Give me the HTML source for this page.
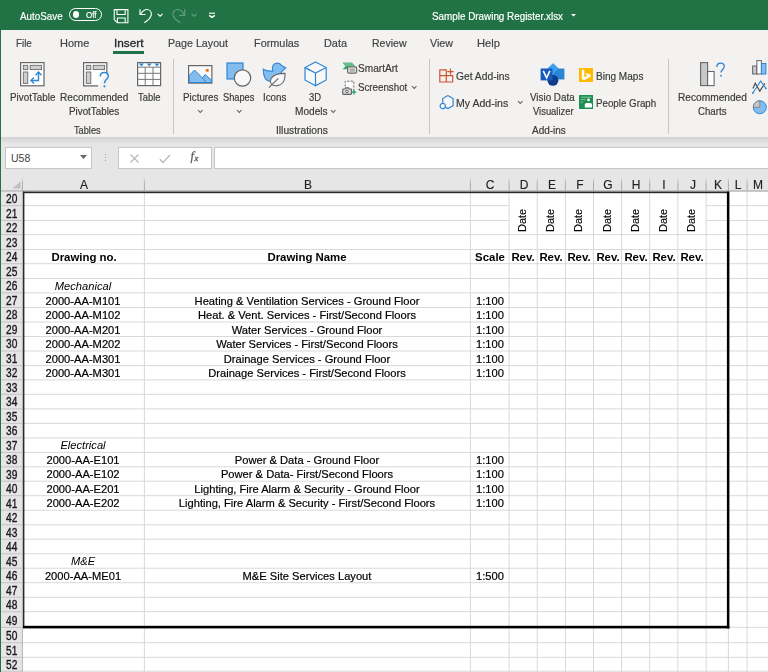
<!DOCTYPE html>
<html><head><meta charset="utf-8"><style>
*{margin:0;padding:0;box-sizing:border-box}
html,body{width:768px;height:672px;overflow:hidden;background:#fff;font-family:"Liberation Sans",sans-serif}
.a{position:absolute}
.t{position:absolute;white-space:nowrap;line-height:1}
.ui{font-size:11px;color:#444;letter-spacing:-0.25px}
.cell{font-size:11px;color:#000;position:absolute;white-space:nowrap;line-height:1}
</style></head>
<body>
<div class="a" style="left:0;top:0;width:768px;height:30px;background:#217346"></div>
<svg class="a" style="left:20.2px;top:5.5px;overflow:visible;will-change:transform" width="42.6" height="18"><text x="0" y="14" font-family="Liberation Sans" font-size="11.5" fill="#fff" font-weight="400" font-style="normal" textLength="42.6" lengthAdjust="spacingAndGlyphs" stroke="#fff" stroke-width="0.2">AutoSave</text></svg>
<div class="a" style="left:69.3px;top:7.8px;width:32.5px;height:13.6px;border:1.2px solid #fff;border-radius:7px"></div>
<div class="a" style="left:72.6px;top:11.2px;width:6.7px;height:6.7px;background:#fff;border-radius:50%"></div>
<svg class="a" style="left:85.5px;top:3.8999999999999986px;overflow:visible;will-change:transform" width="10.6" height="18"><text x="0" y="14" font-family="Liberation Sans" font-size="8.8" fill="#fff" font-weight="400" font-style="normal" textLength="10.6" lengthAdjust="spacingAndGlyphs" stroke="#fff" stroke-width="0.2">Off</text></svg>
<svg class="a" style="left:113px;top:9px" width="16" height="15" viewBox="0 0 16 15">
<path d="M1.25 0.6 H14.9 V13.75 H4.4 L1.25 10.6 Z" fill="none" stroke="#fff" stroke-width="1.1"/>
<path d="M4 0.6 V5.5 H12.2 V0.6" fill="none" stroke="#fff" stroke-width="1.1"/>
<path d="M4.4 13.75 V9 H12.2 V13.75" fill="none" stroke="#fff" stroke-width="1.1"/>
</svg>
<svg class="a" style="left:138px;top:8px" width="16" height="16" viewBox="0 0 16 16">
<path d="M2 1.3 V6.5 H7.5" fill="none" stroke="#fff" stroke-width="1.15"/>
<path d="M2.5 6.3 C4.5 3 7 1.5 9 1.5 C11.5 1.5 13.4 3.5 13.4 6.2 C13.4 9 10.5 12 6.3 14.75" fill="none" stroke="#fff" stroke-width="1.15"/>
</svg>
<svg class="a" style="left:157px;top:12.8px" width="7" height="5" viewBox="0 0 7 5"><path d="M0.6 0.8 L3.1 3.2 L5.6 0.8" fill="none" stroke="#fff" stroke-width="1.1"/></svg>
<svg class="a" style="left:172px;top:8px" width="16" height="16" viewBox="0 0 16 16" opacity="0.3">
<path d="M12.75 1.1 V7.3 H7.3" fill="none" stroke="#fff" stroke-width="1.15"/>
<path d="M12.5 7 C10.5 3 8 1.5 5.7 1.5 C3 1.5 1 3.5 1 6.2 C1 9 3.5 12 8.5 14.75" fill="none" stroke="#fff" stroke-width="1.15"/>
</svg>
<svg class="a" style="left:190.5px;top:12.8px;opacity:0.3" width="7" height="5" viewBox="0 0 7 5"><path d="M0.6 0.8 L3.1 3.2 L5.6 0.8" fill="none" stroke="#fff" stroke-width="1.1"/></svg>
<svg class="a" style="left:208px;top:11px" width="8" height="8" viewBox="0 0 8 8"><path d="M1 2.2 H7" stroke="#fff" stroke-width="1.1"/><path d="M1.2 4.3 L4 6.4 L6.8 4.3" fill="none" stroke="#fff" stroke-width="1.5"/></svg>
<svg class="a" style="left:432.3px;top:5.600000000000001px;overflow:visible;will-change:transform" width="131" height="18"><text x="0" y="14" font-family="Liberation Sans" font-size="11.5" fill="#fff" font-weight="400" font-style="normal" textLength="131" lengthAdjust="spacingAndGlyphs" stroke="#fff" stroke-width="0.2">Sample Drawing Register.xlsx</text></svg>
<svg class="a" style="left:570.6px;top:14.2px" width="5" height="3" viewBox="0 0 5 3"><path d="M0 0 H5 L2.5 2.6 Z" fill="#fff"/></svg>
<div class="a" style="left:0;top:30px;width:768px;height:107px;background:#f3f2f1"></div>
<div class="a" style="left:0;top:30px;width:1px;height:642px;background:#217346"></div>
<svg class="a" style="left:15.5px;top:33.1px;overflow:visible;will-change:transform" width="15.8" height="18"><text x="0" y="14" font-family="Liberation Sans" font-size="11.5" fill="#444" font-weight="400" font-style="normal" textLength="15.8" lengthAdjust="spacingAndGlyphs" stroke="#444" stroke-width="0.2">File</text></svg>
<svg class="a" style="left:60px;top:33.1px;overflow:visible;will-change:transform" width="29.3" height="18"><text x="0" y="14" font-family="Liberation Sans" font-size="11.5" fill="#444" font-weight="400" font-style="normal" textLength="29.3" lengthAdjust="spacingAndGlyphs" stroke="#444" stroke-width="0.2">Home</text></svg>
<svg class="a" style="left:113.6px;top:33.1px;overflow:visible;will-change:transform" width="29.5" height="18"><text x="0" y="14" font-family="Liberation Sans" font-size="11.5" fill="#262626" stroke="#262626" stroke-width="0.3" textLength="29.5" lengthAdjust="spacingAndGlyphs">Insert</text></svg>
<svg class="a" style="left:168.3px;top:33.1px;overflow:visible;will-change:transform" width="60" height="18"><text x="0" y="14" font-family="Liberation Sans" font-size="11.5" fill="#444" font-weight="400" font-style="normal" textLength="60" lengthAdjust="spacingAndGlyphs" stroke="#444" stroke-width="0.2">Page Layout</text></svg>
<svg class="a" style="left:254.2px;top:33.1px;overflow:visible;will-change:transform" width="45.3" height="18"><text x="0" y="14" font-family="Liberation Sans" font-size="11.5" fill="#444" font-weight="400" font-style="normal" textLength="45.3" lengthAdjust="spacingAndGlyphs" stroke="#444" stroke-width="0.2">Formulas</text></svg>
<svg class="a" style="left:324.3px;top:33.1px;overflow:visible;will-change:transform" width="23" height="18"><text x="0" y="14" font-family="Liberation Sans" font-size="11.5" fill="#444" font-weight="400" font-style="normal" textLength="23" lengthAdjust="spacingAndGlyphs" stroke="#444" stroke-width="0.2">Data</text></svg>
<svg class="a" style="left:372px;top:33.1px;overflow:visible;will-change:transform" width="34.5" height="18"><text x="0" y="14" font-family="Liberation Sans" font-size="11.5" fill="#444" font-weight="400" font-style="normal" textLength="34.5" lengthAdjust="spacingAndGlyphs" stroke="#444" stroke-width="0.2">Review</text></svg>
<svg class="a" style="left:430px;top:33.1px;overflow:visible;will-change:transform" width="23" height="18"><text x="0" y="14" font-family="Liberation Sans" font-size="11.5" fill="#444" font-weight="400" font-style="normal" textLength="23" lengthAdjust="spacingAndGlyphs" stroke="#444" stroke-width="0.2">View</text></svg>
<svg class="a" style="left:476.6px;top:33.1px;overflow:visible;will-change:transform" width="23" height="18"><text x="0" y="14" font-family="Liberation Sans" font-size="11.5" fill="#444" font-weight="400" font-style="normal" textLength="23" lengthAdjust="spacingAndGlyphs" stroke="#444" stroke-width="0.2">Help</text></svg>
<div class="a" style="left:113.3px;top:51px;width:30.7px;height:2.5px;background:#217346"></div>
<svg class="a" style="left:9.8px;top:87.2px;overflow:visible;will-change:transform" width="45.5" height="18"><text x="0" y="14" font-family="Liberation Sans" font-size="11.5" fill="#3b3a39" font-weight="400" font-style="normal" textLength="45.5" lengthAdjust="spacingAndGlyphs" stroke="#3b3a39" stroke-width="0.2">PivotTable</text></svg>
<svg class="a" style="left:60px;top:87.2px;overflow:visible;will-change:transform" width="68.3" height="18"><text x="0" y="14" font-family="Liberation Sans" font-size="11.5" fill="#3b3a39" font-weight="400" font-style="normal" textLength="68.3" lengthAdjust="spacingAndGlyphs" stroke="#3b3a39" stroke-width="0.2">Recommended</text></svg>
<svg class="a" style="left:69.3px;top:100.8px;overflow:visible;will-change:transform" width="50.2" height="18"><text x="0" y="14" font-family="Liberation Sans" font-size="11.5" fill="#3b3a39" font-weight="400" font-style="normal" textLength="50.2" lengthAdjust="spacingAndGlyphs" stroke="#3b3a39" stroke-width="0.2">PivotTables</text></svg>
<svg class="a" style="left:138px;top:87.2px;overflow:visible;will-change:transform" width="22.5" height="18"><text x="0" y="14" font-family="Liberation Sans" font-size="11.5" fill="#3b3a39" font-weight="400" font-style="normal" textLength="22.5" lengthAdjust="spacingAndGlyphs" stroke="#3b3a39" stroke-width="0.2">Table</text></svg>
<svg class="a" style="left:73.9px;top:119.9px;overflow:visible;will-change:transform" width="26.6" height="18"><text x="0" y="14" font-family="Liberation Sans" font-size="10.6" fill="#3b3a39" font-weight="400" font-style="normal" textLength="26.6" lengthAdjust="spacingAndGlyphs" stroke="#3b3a39" stroke-width="0.2">Tables</text></svg>
<div class="a" style="left:173px;top:59px;width:1px;height:75px;background:#c8c6c4"></div>
<svg class="a" style="left:20px;top:62px" width="25" height="25" viewBox="0 0 25 25">
<rect x="0.6" y="0.6" width="23.4" height="23.2" fill="#fff" stroke="#666" stroke-width="1.2"/>
<rect x="3.3" y="3.3" width="4.5" height="4.3" fill="#cfcfcf" stroke="#6a6a6a" stroke-width="0.9"/>
<rect x="10.2" y="3.3" width="11.4" height="4.3" fill="#cfcfcf" stroke="#6a6a6a" stroke-width="0.9"/>
<rect x="3.3" y="10" width="4.5" height="11.4" fill="#cfcfcf" stroke="#6a6a6a" stroke-width="0.9"/>
<path d="M11 18.5 H18.5 V10.2" fill="none" stroke="#2e86d4" stroke-width="1.4"/>
<path d="M15.5 13.2 L18.5 10 L21.5 13.2" fill="none" stroke="#2e86d4" stroke-width="1.4"/>
<path d="M14 15.6 L11 18.5 L14 21.4" fill="none" stroke="#2e86d4" stroke-width="1.4"/>
</svg>
<svg class="a" style="left:82.8px;top:62px" width="27" height="27" viewBox="0 0 27 27">
<path d="M15 23.8 H0.6 V0.6 H23.8 V11" fill="#fff" stroke="#666" stroke-width="1.2"/>
<rect x="3.3" y="3.3" width="4.5" height="4.3" fill="#cfcfcf" stroke="#6a6a6a" stroke-width="0.9"/>
<rect x="10.2" y="3.3" width="11.4" height="4.3" fill="#cfcfcf" stroke="#6a6a6a" stroke-width="0.9"/>
<rect x="3.3" y="10" width="4.5" height="11.4" fill="#cfcfcf" stroke="#6a6a6a" stroke-width="0.9"/>
<path d="M17.3 14.5 C17.3 12 19 10.6 21.3 10.6 C23.8 10.6 25.3 12.2 25.3 14.2 C25.3 17.2 21.5 17.5 21.5 21.2" fill="none" stroke="#2e86d4" stroke-width="1.5"/>
<circle cx="21.5" cy="24.3" r="1.1" fill="#2e86d4"/>
</svg>
<svg class="a" style="left:137px;top:62px" width="25" height="25" viewBox="0 0 25 25">
<rect x="0.6" y="0.6" width="23" height="23" fill="#fff" stroke="#666" stroke-width="1.2"/>
<path d="M0.6 5.2 H23.6 M0.6 11.3 H23.6 M0.6 17.4 H23.6 M8.2 5.2 V23.6 M16 5.2 V23.6" stroke="#777" stroke-width="1"/>
<path d="M1.8 1.6 H7 L4.4 4.4 Z M9.6 1.6 H14.8 L12.2 4.4 Z M17.4 1.6 H22.6 L20 4.4 Z" fill="#2e86d4"/>
</svg>
<svg class="a" style="left:182.7px;top:86.6px;overflow:visible;will-change:transform" width="35.5" height="18"><text x="0" y="14" font-family="Liberation Sans" font-size="11.5" fill="#3b3a39" font-weight="400" font-style="normal" textLength="35.5" lengthAdjust="spacingAndGlyphs" stroke="#3b3a39" stroke-width="0.2">Pictures</text></svg>
<svg class="a" style="left:222.6px;top:86.6px;overflow:visible;will-change:transform" width="31.4" height="18"><text x="0" y="14" font-family="Liberation Sans" font-size="11.5" fill="#3b3a39" font-weight="400" font-style="normal" textLength="31.4" lengthAdjust="spacingAndGlyphs" stroke="#3b3a39" stroke-width="0.2">Shapes</text></svg>
<svg class="a" style="left:262.9px;top:86.6px;overflow:visible;will-change:transform" width="23.4" height="18"><text x="0" y="14" font-family="Liberation Sans" font-size="11.5" fill="#3b3a39" font-weight="400" font-style="normal" textLength="23.4" lengthAdjust="spacingAndGlyphs" stroke="#3b3a39" stroke-width="0.2">Icons</text></svg>
<svg class="a" style="left:309.4px;top:86.6px;overflow:visible;will-change:transform" width="12.1" height="18"><text x="0" y="14" font-family="Liberation Sans" font-size="11.5" fill="#3b3a39" font-weight="400" font-style="normal" textLength="12.1" lengthAdjust="spacingAndGlyphs" stroke="#3b3a39" stroke-width="0.2">3D</text></svg>
<svg class="a" style="left:295px;top:100.8px;overflow:visible;will-change:transform" width="32.7" height="18"><text x="0" y="14" font-family="Liberation Sans" font-size="11.5" fill="#3b3a39" font-weight="400" font-style="normal" textLength="32.7" lengthAdjust="spacingAndGlyphs" stroke="#3b3a39" stroke-width="0.2">Models</text></svg>
<svg class="a" style="left:198.3px;top:109.5px;overflow:visible" width="4.5" height="2.5"><path d="M0 0 L2.25 2.5 L4.5 0" fill="none" stroke="#555" stroke-width="1.1"/></svg>
<svg class="a" style="left:236.5px;top:109.5px;overflow:visible" width="4.5" height="2.5"><path d="M0 0 L2.25 2.5 L4.5 0" fill="none" stroke="#555" stroke-width="1.1"/></svg>
<svg class="a" style="left:331px;top:109.5px;overflow:visible" width="4.5" height="2.5"><path d="M0 0 L2.25 2.5 L4.5 0" fill="none" stroke="#555" stroke-width="1.1"/></svg>
<svg class="a" style="left:275.6px;top:119.9px;overflow:visible;will-change:transform" width="51.8" height="18"><text x="0" y="14" font-family="Liberation Sans" font-size="10.6" fill="#3b3a39" font-weight="400" font-style="normal" textLength="51.8" lengthAdjust="spacingAndGlyphs" stroke="#3b3a39" stroke-width="0.2">Illustrations</text></svg>
<svg class="a" style="left:188px;top:64.5px" width="25" height="19" viewBox="0 0 25 19">
<rect x="0.6" y="0.6" width="23.3" height="17.5" fill="#f8f8f8" stroke="#666" stroke-width="1.2"/>
<path d="M1.2 10.5 L6.5 5 L14.5 13 L17 9.5 L23.3 15 V17.5 H1.2 Z" fill="#83bdf0" stroke="#2e86d4" stroke-width="1"/>
<path d="M14.5 13 L18.5 17.5" stroke="#2e86d4" stroke-width="1"/>
<circle cx="19.3" cy="5.3" r="1.6" fill="#e8731a"/>
</svg>
<svg class="a" style="left:226px;top:61.5px" width="27" height="26" viewBox="0 0 27 26">
<rect x="1" y="1" width="16" height="16" fill="#83bdf0" stroke="#2e86d4" stroke-width="1.2"/>
<circle cx="16.5" cy="16" r="8.2" fill="#f8f8f8" stroke="#666" stroke-width="1.2"/>
</svg>
<svg class="a" style="left:262px;top:61.5px" width="26" height="27" viewBox="0 0 26 27">
<path d="M1.3 7.2 C3.5 9 7.5 9.3 10.9 9 C10.5 8 10.4 6.8 10.5 5.6 A4.9 4.9 0 0 1 19.6 3.6 L23.8 5.9 L20.2 9 C18.5 13 15 16.5 8.5 19.5 C3.5 19 1.3 14 1.3 7.2 Z" fill="#83bdf0" stroke="#2e86d4" stroke-width="1.1"/>
<path d="M23 11.4 C17 11.4 12 12.5 9.5 16 C8 18.5 8.5 21.5 10.3 22.8 C13 24.5 18 24 21 20.5 C22.8 18 23 15 23 11.4 Z" fill="#f8f8f8" stroke="#666" stroke-width="1.1"/>
<path d="M6.9 25.7 L16.3 16.4" stroke="#666" stroke-width="1.1"/>
</svg>
<svg class="a" style="left:303.5px;top:60.5px" width="24" height="26" viewBox="0 0 24 26">
<path d="M11.5 1 L22.2 6.5 V19 L11.5 24.8 L1 19 V6.5 Z" fill="#f8f8f8" stroke="#2e86d4" stroke-width="1.2"/>
<path d="M1 6.5 L11.5 12 L22.2 6.5 M11.5 12 V24.8" fill="none" stroke="#2e86d4" stroke-width="1.2"/>
<path d="M1 6.5 L7 9.8" stroke="#2e86d4" stroke-width="1.2"/>
</svg>
<svg class="a" style="left:358.4px;top:58.3px;overflow:visible;will-change:transform" width="39.9" height="18"><text x="0" y="14" font-family="Liberation Sans" font-size="11.5" fill="#3b3a39" font-weight="400" font-style="normal" textLength="39.9" lengthAdjust="spacingAndGlyphs" stroke="#3b3a39" stroke-width="0.2">SmartArt</text></svg>
<svg class="a" style="left:341.5px;top:61.5px" width="16" height="12" viewBox="0 0 16 12">
<path d="M0.7 0.7 H9.9 L13.2 4.3 H7.5 L4.3 7.3 H0.7 L3.6 4 Z" fill="#33a96a"/>
<path d="M0.7 0.7 H9.9 L13.2 4.3 H3.6 Z" fill="#62c08c"/>
<rect x="5.6" y="4.8" width="9" height="6.4" rx="1.2" fill="#e4e4e4" stroke="#6a6a6a" stroke-width="1.2"/>
<path d="M7.6 7.3 H13 M7.6 9 H13" stroke="#777" stroke-width="0.8"/>
</svg>
<svg class="a" style="left:358.4px;top:76.8px;overflow:visible;will-change:transform" width="49.3" height="18"><text x="0" y="14" font-family="Liberation Sans" font-size="11.5" fill="#3b3a39" font-weight="400" font-style="normal" textLength="49.3" lengthAdjust="spacingAndGlyphs" stroke="#3b3a39" stroke-width="0.2">Screenshot</text></svg>
<svg class="a" style="left:411.8px;top:86.3px;overflow:visible" width="4.5" height="2.5"><path d="M0 0 L2.25 2.5 L4.5 0" fill="none" stroke="#555" stroke-width="1.1"/></svg>
<svg class="a" style="left:341.5px;top:79.5px" width="16" height="15" viewBox="0 0 16 15">
<rect x="3.2" y="1.2" width="8.6" height="7" fill="#fafafa"/>
<path d="M3.2 6.5 V1.2 H11.8 V10" fill="none" stroke="#6a6a6a" stroke-width="1" stroke-dasharray="2.2 1.4"/>
<path d="M1.4 9 H3 L3.6 7.9 H6.6 L7.2 9 H8.8 Q9.5 9 9.5 9.7 V13.6 Q9.5 14.3 8.8 14.3 H1.4 Q0.7 14.3 0.7 13.6 V9.7 Q0.7 9 1.4 9 Z" fill="#d9d9d9" stroke="#666" stroke-width="1.2"/>
<circle cx="5" cy="11.4" r="1.3" fill="#f3f3f3" stroke="#666" stroke-width="1"/>
<path d="M12 9.8 V14.5 M9.7 12.2 H14.3" stroke="#21a366" stroke-width="1.3"/>
</svg>
<div class="a" style="left:429px;top:59px;width:1px;height:75px;background:#c8c6c4"></div>
<svg class="a" style="left:455.8px;top:65.6px;overflow:visible;will-change:transform" width="53.7" height="18"><text x="0" y="14" font-family="Liberation Sans" font-size="11.5" fill="#3b3a39" font-weight="400" font-style="normal" textLength="53.7" lengthAdjust="spacingAndGlyphs" stroke="#3b3a39" stroke-width="0.2">Get Add-ins</text></svg>
<svg class="a" style="left:438.5px;top:67.5px" width="15" height="15" viewBox="0 0 15 15">
<path d="M0.8 1.8 H7.3 V14 H0.8 Z M0.8 7.6 H13.7 V14 H7.3" fill="none" stroke="#d35230" stroke-width="1.2"/>
<path d="M11.5 0.4 V6.8 M8.3 3.6 H14.7" stroke="#d35230" stroke-width="1.2"/>
</svg>
<svg class="a" style="left:455.8px;top:92.6px;overflow:visible;will-change:transform" width="52.2" height="18"><text x="0" y="14" font-family="Liberation Sans" font-size="11.5" fill="#3b3a39" font-weight="400" font-style="normal" textLength="52.2" lengthAdjust="spacingAndGlyphs" stroke="#3b3a39" stroke-width="0.2">My Add-ins</text></svg>
<svg class="a" style="left:518.3px;top:101.3px;overflow:visible" width="4.5" height="2.5"><path d="M0 0 L2.25 2.5 L4.5 0" fill="none" stroke="#555" stroke-width="1.1"/></svg>
<svg class="a" style="left:438.5px;top:95px" width="16" height="15" viewBox="0 0 16 15">
<path d="M3.7 7.8 V3.6 L8.9 0.6 L14.1 3.6 V10.7 L8.9 13.5 L6.6 12.3" fill="#f6f6f6" stroke="#2e86d4" stroke-width="1.2"/>
<circle cx="3.8" cy="11" r="2.7" fill="#fff" stroke="#2e86d4" stroke-width="1.2"/>
</svg>
<svg class="a" style="left:529.6px;top:87.1px;overflow:visible;will-change:transform" width="44.6" height="18"><text x="0" y="14" font-family="Liberation Sans" font-size="11.5" fill="#3b3a39" font-weight="400" font-style="normal" textLength="44.6" lengthAdjust="spacingAndGlyphs" stroke="#3b3a39" stroke-width="0.2">Visio Data</text></svg>
<svg class="a" style="left:532.7px;top:100.8px;overflow:visible;will-change:transform" width="40.6" height="18"><text x="0" y="14" font-family="Liberation Sans" font-size="11.5" fill="#3b3a39" font-weight="400" font-style="normal" textLength="40.6" lengthAdjust="spacingAndGlyphs" stroke="#3b3a39" stroke-width="0.2">Visualizer</text></svg>
<svg class="a" style="left:539.5px;top:62.5px" width="25" height="24" viewBox="0 0 25 24">
<path d="M12.9 0.3 L18.6 5.5 H24.4 V16.4 H12.9 Z" fill="#2a85d6"/>
<path d="M12.9 0.3 L18.6 5.5 L12.9 11.5 L7.4 5.5 Z" fill="#3ca2ee"/>
<circle cx="12.9" cy="17.3" r="5.5" fill="#0f3d8c"/>
<rect x="0.6" y="5.5" width="11.9" height="11.9" fill="#185abd"/>
<path d="M3.3 7.8 L6.6 14.8 L9.9 7.8" fill="none" stroke="#fff" stroke-width="1.6"/>
</svg>
<svg class="a" style="left:595.7px;top:65.6px;overflow:visible;will-change:transform" width="47.4" height="18"><text x="0" y="14" font-family="Liberation Sans" font-size="11.5" fill="#3b3a39" font-weight="400" font-style="normal" textLength="47.4" lengthAdjust="spacingAndGlyphs" stroke="#3b3a39" stroke-width="0.2">Bing Maps</text></svg>
<svg class="a" style="left:579px;top:68px" width="14" height="14" viewBox="0 0 14 14">
<rect x="0" y="0" width="14" height="14" fill="#ffb900"/>
<path d="M2.8 1.4 L5.3 2.1 V9.2 L8.8 7.4 L7.2 6.7 L6.6 5 L11.6 6.5 V8.5 L5.3 12.3 L2.8 10.9 Z" fill="#fff"/>
</svg>
<svg class="a" style="left:595.7px;top:92.6px;overflow:visible;will-change:transform" width="60.2" height="18"><text x="0" y="14" font-family="Liberation Sans" font-size="11.5" fill="#3b3a39" font-weight="400" font-style="normal" textLength="60.2" lengthAdjust="spacingAndGlyphs" stroke="#3b3a39" stroke-width="0.2">People Graph</text></svg>
<svg class="a" style="left:579px;top:95px" width="14" height="14" viewBox="0 0 14 14">
<rect x="0" y="0" width="14" height="14" fill="#1d8f52"/>
<path d="M1.8 2.2 H12.5 M1.8 4.7 H6.5 M1.8 7.2 H3.8" stroke="#8fd0ac" stroke-width="0.9"/>
<circle cx="9.5" cy="4.9" r="1.4" fill="#fff"/>
<path d="M5.8 12.6 V9.5 C5.8 8.3 7 7.9 9.4 7.9 C11.8 7.9 13 8.3 13 9.5 V12.6 Z" fill="#fff"/>
</svg>
<svg class="a" style="left:531.5px;top:119.9px;overflow:visible;will-change:transform" width="33.8" height="18"><text x="0" y="14" font-family="Liberation Sans" font-size="10.6" fill="#3b3a39" font-weight="400" font-style="normal" textLength="33.8" lengthAdjust="spacingAndGlyphs" stroke="#3b3a39" stroke-width="0.2">Add-ins</text></svg>
<div class="a" style="left:668px;top:59px;width:1px;height:75px;background:#c8c6c4"></div>
<svg class="a" style="left:677.6px;top:87.3px;overflow:visible;will-change:transform" width="68.9" height="18"><text x="0" y="14" font-family="Liberation Sans" font-size="11.5" fill="#3b3a39" font-weight="400" font-style="normal" textLength="68.9" lengthAdjust="spacingAndGlyphs" stroke="#3b3a39" stroke-width="0.2">Recommended</text></svg>
<svg class="a" style="left:698.3px;top:100.8px;overflow:visible;will-change:transform" width="28.5" height="18"><text x="0" y="14" font-family="Liberation Sans" font-size="11.5" fill="#3b3a39" font-weight="400" font-style="normal" textLength="28.5" lengthAdjust="spacingAndGlyphs" stroke="#3b3a39" stroke-width="0.2">Charts</text></svg>
<svg class="a" style="left:700px;top:62px" width="26" height="25" viewBox="0 0 26 25">
<rect x="0.6" y="0.6" width="7" height="23" fill="#c8c8c8" stroke="#666" stroke-width="1.1"/>
<rect x="7.6" y="9.5" width="6.5" height="14.1" fill="#fff" stroke="#666" stroke-width="1.1"/>
<path d="M16.8 5 C16.8 2.5 18.3 1.2 20.5 1.2 C22.7 1.2 24.3 2.5 24.3 4.6 C24.3 7.2 21 7.7 21 10.5" fill="none" stroke="#2e86d4" stroke-width="1.3"/>
<circle cx="21" cy="13.7" r="0.9" fill="#2e86d4"/>
</svg>
<svg class="a" style="left:751.5px;top:60px" width="16" height="15" viewBox="0 0 16 15">
<rect x="0.6" y="6" width="4.3" height="8" fill="#c8c8c8" stroke="#666" stroke-width="1"/>
<rect x="4.9" y="0.6" width="4.5" height="13.4" fill="#fff" stroke="#666" stroke-width="1"/>
<rect x="9.4" y="3.5" width="4.5" height="10.5" fill="#83bdf0" stroke="#2e86d4" stroke-width="1"/>
</svg>
<svg class="a" style="left:751.5px;top:79.5px" width="16" height="14" viewBox="0 0 16 14">
<path d="M0.9 8.4 L3.2 3.3 L7.8 11.1 L12.9 3.3" fill="none" stroke="#444" stroke-width="1.1"/>
<path d="M0.9 13 L8.7 1 L13.8 8.4" fill="none" stroke="#2e86d4" stroke-width="1.1"/><circle cx="0.9" cy="13" r="0.9" fill="#2e86d4"/><circle cx="13.8" cy="8.4" r="0.9" fill="#2e86d4"/>
</svg>
<svg class="a" style="left:751.5px;top:99.5px" width="16" height="15" viewBox="0 0 16 15">
<circle cx="7.8" cy="7.3" r="6.5" fill="#83bdf0" stroke="#2e86d4" stroke-width="1"/>
<path d="M7.8 7.3 V0.8 A6.5 6.5 0 0 0 1.3 7.3 Z" fill="#c8c8c8" stroke="#777" stroke-width="0.8"/>
</svg>
<div class="a" style="left:1px;top:137px;width:767px;height:55px;background:#e6e6e6"></div>
<div class="a" style="left:1px;top:137px;width:767px;height:7px;background:linear-gradient(#d2d2d2,#e6e6e6)"></div>
<div class="a" style="left:5.3px;top:146.5px;width:86.7px;height:22.5px;background:#fff;border:1px solid #c6c6c6"></div>
<svg class="a" style="left:11px;top:148px;overflow:visible" width="30" height="18"><text x="0" y="13.9" font-family="Liberation Sans" font-size="11.5" fill="#444" textLength="19.3" lengthAdjust="spacingAndGlyphs">U58</text></svg>
<svg class="a" style="left:79.5px;top:155px" width="7" height="4" viewBox="0 0 7 4"><path d="M0 0 H7 L3.5 4 Z" fill="#666"/></svg>
<div class="a" style="left:104.5px;top:153.5px;width:1.3px;height:1.3px;background:#9a9a9a"></div>
<div class="a" style="left:104.5px;top:156.8px;width:1.3px;height:1.3px;background:#9a9a9a"></div>
<div class="a" style="left:104.5px;top:160.1px;width:1.3px;height:1.3px;background:#9a9a9a"></div>
<div class="a" style="left:117.5px;top:146.5px;width:94px;height:22.5px;background:#fff;border:1px solid #c6c6c6"></div>
<svg class="a" style="left:129px;top:154px" width="11" height="9" viewBox="0 0 11 9"><path d="M1.5 0.5 L9.5 8.5 M9.5 0.5 L1.5 8.5" stroke="#b8b8b8" stroke-width="1.2"/></svg>
<svg class="a" style="left:159px;top:153.5px" width="12" height="10" viewBox="0 0 12 10"><path d="M0.8 5.2 L4 8.5 L11 1" fill="none" stroke="#b8b8b8" stroke-width="1.3"/></svg>
<svg class="a" style="left:189px;top:150px;overflow:visible;will-change:transform" width="14" height="16"><text x="1.5" y="10.3" font-family="Liberation Serif" font-style="italic" font-size="12.5" fill="#5a5a5a" stroke="#5a5a5a" stroke-width="0.25">f</text><text x="5.4" y="11.4" font-family="Liberation Serif" font-style="italic" font-size="8.5" fill="#5a5a5a" stroke="#5a5a5a" stroke-width="0.35">x</text></svg>
<div class="a" style="left:213.5px;top:146.5px;width:560px;height:22.5px;background:#fff;border:1px solid #c6c6c6"></div>
<svg class="a" style="left:11px;top:180.5px" width="10" height="8" viewBox="0 0 10 8"><path d="M9.5 0.5 V7.5 H1.5 Z" fill="#c0c0c0"/></svg>
<svg class="a" style="left:64.4px;top:176.5px;overflow:visible" width="40" height="16"><text x="20" y="12" text-anchor="middle" font-family="Liberation Sans" font-size="12" fill="#222" stroke="#222" stroke-width="0.15">A</text></svg>
<svg class="a" style="left:287.9px;top:176.5px;overflow:visible" width="40" height="16"><text x="20" y="12" text-anchor="middle" font-family="Liberation Sans" font-size="12" fill="#222" stroke="#222" stroke-width="0.15">B</text></svg>
<svg class="a" style="left:470.25px;top:176.5px;overflow:visible" width="40" height="16"><text x="20" y="12" text-anchor="middle" font-family="Liberation Sans" font-size="12" fill="#222" stroke="#222" stroke-width="0.15">C</text></svg>
<svg class="a" style="left:503.6500000000001px;top:176.5px;overflow:visible" width="40" height="16"><text x="20" y="12" text-anchor="middle" font-family="Liberation Sans" font-size="12" fill="#222" stroke="#222" stroke-width="0.15">D</text></svg>
<svg class="a" style="left:531.8px;top:176.5px;overflow:visible" width="40" height="16"><text x="20" y="12" text-anchor="middle" font-family="Liberation Sans" font-size="12" fill="#222" stroke="#222" stroke-width="0.15">E</text></svg>
<svg class="a" style="left:559.95px;top:176.5px;overflow:visible" width="40" height="16"><text x="20" y="12" text-anchor="middle" font-family="Liberation Sans" font-size="12" fill="#222" stroke="#222" stroke-width="0.15">F</text></svg>
<svg class="a" style="left:588.05px;top:176.5px;overflow:visible" width="40" height="16"><text x="20" y="12" text-anchor="middle" font-family="Liberation Sans" font-size="12" fill="#222" stroke="#222" stroke-width="0.15">G</text></svg>
<svg class="a" style="left:616.1500000000001px;top:176.5px;overflow:visible" width="40" height="16"><text x="20" y="12" text-anchor="middle" font-family="Liberation Sans" font-size="12" fill="#222" stroke="#222" stroke-width="0.15">H</text></svg>
<svg class="a" style="left:644.3px;top:176.5px;overflow:visible" width="40" height="16"><text x="20" y="12" text-anchor="middle" font-family="Liberation Sans" font-size="12" fill="#222" stroke="#222" stroke-width="0.15">I</text></svg>
<svg class="a" style="left:672.5px;top:176.5px;overflow:visible" width="40" height="16"><text x="20" y="12" text-anchor="middle" font-family="Liberation Sans" font-size="12" fill="#222" stroke="#222" stroke-width="0.15">J</text></svg>
<svg class="a" style="left:697.75px;top:176.5px;overflow:visible" width="40" height="16"><text x="20" y="12" text-anchor="middle" font-family="Liberation Sans" font-size="12" fill="#222" stroke="#222" stroke-width="0.15">K</text></svg>
<svg class="a" style="left:718.25px;top:176.5px;overflow:visible" width="40" height="16"><text x="20" y="12" text-anchor="middle" font-family="Liberation Sans" font-size="12" fill="#222" stroke="#222" stroke-width="0.15">L</text></svg>
<svg class="a" style="left:738.35px;top:176.5px;overflow:visible" width="40" height="16"><text x="20" y="12" text-anchor="middle" font-family="Liberation Sans" font-size="12" fill="#222" stroke="#222" stroke-width="0.15">M</text></svg>
<div class="a" style="left:1px;top:191.5px;width:21.4px;height:481px;background:#e6e6e6"></div>
<svg class="a" style="left:6px;top:191.0px;overflow:visible" width="18" height="16"><text x="0" y="12" font-family="Liberation Sans" font-size="12" fill="#1a1a1a" stroke="#1a1a1a" stroke-width="0.35" textLength="11.3" lengthAdjust="spacingAndGlyphs">20</text></svg>
<svg class="a" style="left:6px;top:205.9px;overflow:visible" width="18" height="16"><text x="0" y="12" font-family="Liberation Sans" font-size="12" fill="#1a1a1a" stroke="#1a1a1a" stroke-width="0.35" textLength="11.3" lengthAdjust="spacingAndGlyphs">21</text></svg>
<svg class="a" style="left:6px;top:220.0px;overflow:visible" width="18" height="16"><text x="0" y="12" font-family="Liberation Sans" font-size="12" fill="#1a1a1a" stroke="#1a1a1a" stroke-width="0.35" textLength="11.3" lengthAdjust="spacingAndGlyphs">22</text></svg>
<svg class="a" style="left:6px;top:234.9px;overflow:visible" width="18" height="16"><text x="0" y="12" font-family="Liberation Sans" font-size="12" fill="#1a1a1a" stroke="#1a1a1a" stroke-width="0.35" textLength="11.3" lengthAdjust="spacingAndGlyphs">23</text></svg>
<svg class="a" style="left:6px;top:249.1px;overflow:visible" width="18" height="16"><text x="0" y="12" font-family="Liberation Sans" font-size="12" fill="#1a1a1a" stroke="#1a1a1a" stroke-width="0.35" textLength="11.3" lengthAdjust="spacingAndGlyphs">24</text></svg>
<svg class="a" style="left:6px;top:263.9px;overflow:visible" width="18" height="16"><text x="0" y="12" font-family="Liberation Sans" font-size="12" fill="#1a1a1a" stroke="#1a1a1a" stroke-width="0.35" textLength="11.3" lengthAdjust="spacingAndGlyphs">25</text></svg>
<svg class="a" style="left:6px;top:278.29999999999995px;overflow:visible" width="18" height="16"><text x="0" y="12" font-family="Liberation Sans" font-size="12" fill="#1a1a1a" stroke="#1a1a1a" stroke-width="0.35" textLength="11.3" lengthAdjust="spacingAndGlyphs">26</text></svg>
<svg class="a" style="left:6px;top:292.9px;overflow:visible" width="18" height="16"><text x="0" y="12" font-family="Liberation Sans" font-size="12" fill="#1a1a1a" stroke="#1a1a1a" stroke-width="0.35" textLength="11.3" lengthAdjust="spacingAndGlyphs">27</text></svg>
<svg class="a" style="left:6px;top:307.4px;overflow:visible" width="18" height="16"><text x="0" y="12" font-family="Liberation Sans" font-size="12" fill="#1a1a1a" stroke="#1a1a1a" stroke-width="0.35" textLength="11.3" lengthAdjust="spacingAndGlyphs">28</text></svg>
<svg class="a" style="left:6px;top:321.9px;overflow:visible" width="18" height="16"><text x="0" y="12" font-family="Liberation Sans" font-size="12" fill="#1a1a1a" stroke="#1a1a1a" stroke-width="0.35" textLength="11.3" lengthAdjust="spacingAndGlyphs">29</text></svg>
<svg class="a" style="left:6px;top:336.4px;overflow:visible" width="18" height="16"><text x="0" y="12" font-family="Liberation Sans" font-size="12" fill="#1a1a1a" stroke="#1a1a1a" stroke-width="0.35" textLength="11.3" lengthAdjust="spacingAndGlyphs">30</text></svg>
<svg class="a" style="left:6px;top:351.0px;overflow:visible" width="18" height="16"><text x="0" y="12" font-family="Liberation Sans" font-size="12" fill="#1a1a1a" stroke="#1a1a1a" stroke-width="0.35" textLength="11.3" lengthAdjust="spacingAndGlyphs">31</text></svg>
<svg class="a" style="left:6px;top:365.29999999999995px;overflow:visible" width="18" height="16"><text x="0" y="12" font-family="Liberation Sans" font-size="12" fill="#1a1a1a" stroke="#1a1a1a" stroke-width="0.35" textLength="11.3" lengthAdjust="spacingAndGlyphs">32</text></svg>
<svg class="a" style="left:6px;top:379.7px;overflow:visible" width="18" height="16"><text x="0" y="12" font-family="Liberation Sans" font-size="12" fill="#1a1a1a" stroke="#1a1a1a" stroke-width="0.35" textLength="11.3" lengthAdjust="spacingAndGlyphs">33</text></svg>
<svg class="a" style="left:6px;top:394.29999999999995px;overflow:visible" width="18" height="16"><text x="0" y="12" font-family="Liberation Sans" font-size="12" fill="#1a1a1a" stroke="#1a1a1a" stroke-width="0.35" textLength="11.3" lengthAdjust="spacingAndGlyphs">34</text></svg>
<svg class="a" style="left:6px;top:408.79999999999995px;overflow:visible" width="18" height="16"><text x="0" y="12" font-family="Liberation Sans" font-size="12" fill="#1a1a1a" stroke="#1a1a1a" stroke-width="0.35" textLength="11.3" lengthAdjust="spacingAndGlyphs">35</text></svg>
<svg class="a" style="left:6px;top:423.29999999999995px;overflow:visible" width="18" height="16"><text x="0" y="12" font-family="Liberation Sans" font-size="12" fill="#1a1a1a" stroke="#1a1a1a" stroke-width="0.35" textLength="11.3" lengthAdjust="spacingAndGlyphs">36</text></svg>
<svg class="a" style="left:6px;top:437.79999999999995px;overflow:visible" width="18" height="16"><text x="0" y="12" font-family="Liberation Sans" font-size="12" fill="#1a1a1a" stroke="#1a1a1a" stroke-width="0.35" textLength="11.3" lengthAdjust="spacingAndGlyphs">37</text></svg>
<svg class="a" style="left:6px;top:452.2px;overflow:visible" width="18" height="16"><text x="0" y="12" font-family="Liberation Sans" font-size="12" fill="#1a1a1a" stroke="#1a1a1a" stroke-width="0.35" textLength="11.3" lengthAdjust="spacingAndGlyphs">38</text></svg>
<svg class="a" style="left:6px;top:466.59999999999997px;overflow:visible" width="18" height="16"><text x="0" y="12" font-family="Liberation Sans" font-size="12" fill="#1a1a1a" stroke="#1a1a1a" stroke-width="0.35" textLength="11.3" lengthAdjust="spacingAndGlyphs">39</text></svg>
<svg class="a" style="left:6px;top:481.09999999999997px;overflow:visible" width="18" height="16"><text x="0" y="12" font-family="Liberation Sans" font-size="12" fill="#1a1a1a" stroke="#1a1a1a" stroke-width="0.35" textLength="11.3" lengthAdjust="spacingAndGlyphs">40</text></svg>
<svg class="a" style="left:6px;top:495.59999999999997px;overflow:visible" width="18" height="16"><text x="0" y="12" font-family="Liberation Sans" font-size="12" fill="#1a1a1a" stroke="#1a1a1a" stroke-width="0.35" textLength="11.3" lengthAdjust="spacingAndGlyphs">41</text></svg>
<svg class="a" style="left:6px;top:510.19999999999993px;overflow:visible" width="18" height="16"><text x="0" y="12" font-family="Liberation Sans" font-size="12" fill="#1a1a1a" stroke="#1a1a1a" stroke-width="0.35" textLength="11.3" lengthAdjust="spacingAndGlyphs">42</text></svg>
<svg class="a" style="left:6px;top:524.6px;overflow:visible" width="18" height="16"><text x="0" y="12" font-family="Liberation Sans" font-size="12" fill="#1a1a1a" stroke="#1a1a1a" stroke-width="0.35" textLength="11.3" lengthAdjust="spacingAndGlyphs">43</text></svg>
<svg class="a" style="left:6px;top:539.1999999999999px;overflow:visible" width="18" height="16"><text x="0" y="12" font-family="Liberation Sans" font-size="12" fill="#1a1a1a" stroke="#1a1a1a" stroke-width="0.35" textLength="11.3" lengthAdjust="spacingAndGlyphs">44</text></svg>
<svg class="a" style="left:6px;top:553.6px;overflow:visible" width="18" height="16"><text x="0" y="12" font-family="Liberation Sans" font-size="12" fill="#1a1a1a" stroke="#1a1a1a" stroke-width="0.35" textLength="11.3" lengthAdjust="spacingAndGlyphs">45</text></svg>
<svg class="a" style="left:6px;top:568.1px;overflow:visible" width="18" height="16"><text x="0" y="12" font-family="Liberation Sans" font-size="12" fill="#1a1a1a" stroke="#1a1a1a" stroke-width="0.35" textLength="11.3" lengthAdjust="spacingAndGlyphs">46</text></svg>
<svg class="a" style="left:6px;top:582.6999999999999px;overflow:visible" width="18" height="16"><text x="0" y="12" font-family="Liberation Sans" font-size="12" fill="#1a1a1a" stroke="#1a1a1a" stroke-width="0.35" textLength="11.3" lengthAdjust="spacingAndGlyphs">47</text></svg>
<svg class="a" style="left:6px;top:597.1px;overflow:visible" width="18" height="16"><text x="0" y="12" font-family="Liberation Sans" font-size="12" fill="#1a1a1a" stroke="#1a1a1a" stroke-width="0.35" textLength="11.3" lengthAdjust="spacingAndGlyphs">48</text></svg>
<svg class="a" style="left:6px;top:612.6999999999999px;overflow:visible" width="18" height="16"><text x="0" y="12" font-family="Liberation Sans" font-size="12" fill="#1a1a1a" stroke="#1a1a1a" stroke-width="0.35" textLength="11.3" lengthAdjust="spacingAndGlyphs">49</text></svg>
<svg class="a" style="left:6px;top:628.1px;overflow:visible" width="18" height="16"><text x="0" y="12" font-family="Liberation Sans" font-size="12" fill="#1a1a1a" stroke="#1a1a1a" stroke-width="0.35" textLength="11.3" lengthAdjust="spacingAndGlyphs">50</text></svg>
<svg class="a" style="left:6px;top:642.6999999999999px;overflow:visible" width="18" height="16"><text x="0" y="12" font-family="Liberation Sans" font-size="12" fill="#1a1a1a" stroke="#1a1a1a" stroke-width="0.35" textLength="11.3" lengthAdjust="spacingAndGlyphs">51</text></svg>
<svg class="a" style="left:6px;top:656.6px;overflow:visible" width="18" height="16"><text x="0" y="12" font-family="Liberation Sans" font-size="12" fill="#1a1a1a" stroke="#1a1a1a" stroke-width="0.35" textLength="11.3" lengthAdjust="spacingAndGlyphs">52</text></svg>
<svg class="a" style="left:0;top:0" width="768" height="672"><defs><linearGradient id="hg" x1="0" y1="0" x2="0" y2="1"><stop offset="0" stop-color="#ababab" stop-opacity="0"/><stop offset="0.45" stop-color="#ababab"/></linearGradient></defs><rect x="21.9" y="177" width="1" height="14.5" fill="url(#hg)"/><rect x="143.9" y="177" width="1" height="14.5" fill="url(#hg)"/><rect x="469.9" y="177" width="1" height="14.5" fill="url(#hg)"/><rect x="508.6" y="177" width="1" height="14.5" fill="url(#hg)"/><rect x="536.7" y="177" width="1" height="14.5" fill="url(#hg)"/><rect x="564.9" y="177" width="1" height="14.5" fill="url(#hg)"/><rect x="593.0" y="177" width="1" height="14.5" fill="url(#hg)"/><rect x="621.1" y="177" width="1" height="14.5" fill="url(#hg)"/><rect x="649.2" y="177" width="1" height="14.5" fill="url(#hg)"/><rect x="677.4" y="177" width="1" height="14.5" fill="url(#hg)"/><rect x="705.6" y="177" width="1" height="14.5" fill="url(#hg)"/><rect x="727.9" y="177" width="1" height="14.5" fill="url(#hg)"/><rect x="746.6" y="177" width="1" height="14.5" fill="url(#hg)"/><rect x="1" y="190.4" width="767" height="1.1" fill="#ababab"/><rect x="21.9" y="191.5" width="1" height="481" fill="#b4b4b4"/><rect x="1" y="205.1" width="21" height="1" fill="#c4c4c4"/><rect x="23" y="205.1" width="486.1" height="1" fill="#d9d9d9"/><rect x="706.1" y="205.1" width="62" height="1" fill="#d9d9d9"/><rect x="1" y="220.0" width="21" height="1" fill="#c4c4c4"/><rect x="23" y="220.0" width="486.1" height="1" fill="#d9d9d9"/><rect x="706.1" y="220.0" width="62" height="1" fill="#d9d9d9"/><rect x="1" y="234.1" width="21" height="1" fill="#c4c4c4"/><rect x="23" y="234.1" width="745" height="1" fill="#d9d9d9"/><rect x="1" y="249.0" width="21" height="1" fill="#c4c4c4"/><rect x="23" y="249.0" width="745" height="1" fill="#d9d9d9"/><rect x="1" y="263.2" width="21" height="1" fill="#c4c4c4"/><rect x="23" y="263.2" width="745" height="1" fill="#d9d9d9"/><rect x="1" y="278.0" width="21" height="1" fill="#c4c4c4"/><rect x="23" y="278.0" width="745" height="1" fill="#d9d9d9"/><rect x="1" y="292.4" width="21" height="1" fill="#c4c4c4"/><rect x="23" y="292.4" width="745" height="1" fill="#d9d9d9"/><rect x="1" y="307.0" width="21" height="1" fill="#c4c4c4"/><rect x="23" y="307.0" width="745" height="1" fill="#d9d9d9"/><rect x="1" y="321.5" width="21" height="1" fill="#c4c4c4"/><rect x="23" y="321.5" width="745" height="1" fill="#d9d9d9"/><rect x="1" y="336.0" width="21" height="1" fill="#c4c4c4"/><rect x="23" y="336.0" width="745" height="1" fill="#d9d9d9"/><rect x="1" y="350.5" width="21" height="1" fill="#c4c4c4"/><rect x="23" y="350.5" width="745" height="1" fill="#d9d9d9"/><rect x="1" y="365.1" width="21" height="1" fill="#c4c4c4"/><rect x="23" y="365.1" width="745" height="1" fill="#d9d9d9"/><rect x="1" y="379.4" width="21" height="1" fill="#c4c4c4"/><rect x="23" y="379.4" width="745" height="1" fill="#d9d9d9"/><rect x="1" y="393.8" width="21" height="1" fill="#c4c4c4"/><rect x="23" y="393.8" width="745" height="1" fill="#d9d9d9"/><rect x="1" y="408.4" width="21" height="1" fill="#c4c4c4"/><rect x="23" y="408.4" width="745" height="1" fill="#d9d9d9"/><rect x="1" y="422.9" width="21" height="1" fill="#c4c4c4"/><rect x="23" y="422.9" width="745" height="1" fill="#d9d9d9"/><rect x="1" y="437.4" width="21" height="1" fill="#c4c4c4"/><rect x="23" y="437.4" width="745" height="1" fill="#d9d9d9"/><rect x="1" y="451.9" width="21" height="1" fill="#c4c4c4"/><rect x="23" y="451.9" width="745" height="1" fill="#d9d9d9"/><rect x="1" y="466.3" width="21" height="1" fill="#c4c4c4"/><rect x="23" y="466.3" width="745" height="1" fill="#d9d9d9"/><rect x="1" y="480.7" width="21" height="1" fill="#c4c4c4"/><rect x="23" y="480.7" width="745" height="1" fill="#d9d9d9"/><rect x="1" y="495.2" width="21" height="1" fill="#c4c4c4"/><rect x="23" y="495.2" width="745" height="1" fill="#d9d9d9"/><rect x="1" y="509.7" width="21" height="1" fill="#c4c4c4"/><rect x="23" y="509.7" width="745" height="1" fill="#d9d9d9"/><rect x="1" y="524.3" width="21" height="1" fill="#c4c4c4"/><rect x="23" y="524.3" width="745" height="1" fill="#d9d9d9"/><rect x="1" y="538.7" width="21" height="1" fill="#c4c4c4"/><rect x="23" y="538.7" width="745" height="1" fill="#d9d9d9"/><rect x="1" y="553.3" width="21" height="1" fill="#c4c4c4"/><rect x="23" y="553.3" width="745" height="1" fill="#d9d9d9"/><rect x="1" y="567.7" width="21" height="1" fill="#c4c4c4"/><rect x="23" y="567.7" width="745" height="1" fill="#d9d9d9"/><rect x="1" y="582.2" width="21" height="1" fill="#c4c4c4"/><rect x="23" y="582.2" width="745" height="1" fill="#d9d9d9"/><rect x="1" y="596.8" width="21" height="1" fill="#c4c4c4"/><rect x="23" y="596.8" width="745" height="1" fill="#d9d9d9"/><rect x="1" y="611.2" width="21" height="1" fill="#c4c4c4"/><rect x="23" y="611.2" width="745" height="1" fill="#d9d9d9"/><rect x="1" y="626.8" width="21" height="1" fill="#c4c4c4"/><rect x="23" y="626.8" width="745" height="1" fill="#d9d9d9"/><rect x="1" y="642.2" width="21" height="1" fill="#c4c4c4"/><rect x="23" y="642.2" width="745" height="1" fill="#d9d9d9"/><rect x="1" y="656.8" width="21" height="1" fill="#c4c4c4"/><rect x="23" y="656.8" width="745" height="1" fill="#d9d9d9"/><rect x="1" y="670.7" width="21" height="1" fill="#c4c4c4"/><rect x="23" y="670.7" width="745" height="1" fill="#d9d9d9"/><rect x="143.9" y="191.5" width="1" height="481" fill="#d9d9d9"/><rect x="469.9" y="191.5" width="1" height="481" fill="#d9d9d9"/><rect x="508.6" y="191.5" width="1" height="481" fill="#d9d9d9"/><rect x="536.7" y="191.5" width="1" height="481" fill="#d9d9d9"/><rect x="564.9" y="191.5" width="1" height="481" fill="#d9d9d9"/><rect x="593.0" y="191.5" width="1" height="481" fill="#d9d9d9"/><rect x="621.1" y="191.5" width="1" height="481" fill="#d9d9d9"/><rect x="649.2" y="191.5" width="1" height="481" fill="#d9d9d9"/><rect x="677.4" y="191.5" width="1" height="481" fill="#d9d9d9"/><rect x="705.6" y="191.5" width="1" height="481" fill="#d9d9d9"/><rect x="727.9" y="191.5" width="1" height="481" fill="#d9d9d9"/><rect x="746.6" y="191.5" width="1" height="481" fill="#d9d9d9"/><rect x="23" y="191.6" width="706" height="1.6" fill="#2a2a2a"/><rect x="23" y="191.6" width="1.4" height="436" fill="#2a2a2a"/><rect x="726.9" y="191.6" width="2.5" height="436.8" fill="#000"/><rect x="23" y="625.8" width="706.4" height="2.6" fill="#000"/></svg>
<svg class="a" style="left:-66.05px;top:248.7px;overflow:visible" width="300" height="16"><text x="150" y="12" text-anchor="middle" font-family="Liberation Sans" font-size="11.4" font-weight="700" font-style="normal" fill="#000">Drawing no.</text></svg>
<svg class="a" style="left:157.39999999999998px;top:248.7px;overflow:visible" width="300" height="16"><text x="150" y="12" text-anchor="middle" font-family="Liberation Sans" font-size="11.4" font-weight="700" font-style="normal" fill="#000">Drawing Name</text></svg>
<svg class="a" style="left:339.7px;top:248.7px;overflow:visible" width="300" height="16"><text x="150" y="12" text-anchor="middle" font-family="Liberation Sans" font-size="11.4" font-weight="700" font-style="normal" fill="#000">Scale</text></svg>
<svg class="a" style="left:373.1500000000001px;top:248.7px;overflow:visible" width="300" height="16"><text x="150" y="12" text-anchor="middle" font-family="Liberation Sans" font-size="11.4" font-weight="700" font-style="normal" fill="#000">Rev.</text></svg>
<svg class="a" style="left:515.1500000000001px;top:201.6px;overflow:visible" width="20" height="30"><text transform="translate(10.6 30) rotate(-90)" x="0" y="0" font-family="Liberation Sans" font-size="11" fill="#000" stroke="#000" stroke-width="0.1">Date</text></svg>
<svg class="a" style="left:401.29999999999995px;top:248.7px;overflow:visible" width="300" height="16"><text x="150" y="12" text-anchor="middle" font-family="Liberation Sans" font-size="11.4" font-weight="700" font-style="normal" fill="#000">Rev.</text></svg>
<svg class="a" style="left:543.3px;top:201.6px;overflow:visible" width="20" height="30"><text transform="translate(10.6 30) rotate(-90)" x="0" y="0" font-family="Liberation Sans" font-size="11" fill="#000" stroke="#000" stroke-width="0.1">Date</text></svg>
<svg class="a" style="left:429.45000000000005px;top:248.7px;overflow:visible" width="300" height="16"><text x="150" y="12" text-anchor="middle" font-family="Liberation Sans" font-size="11.4" font-weight="700" font-style="normal" fill="#000">Rev.</text></svg>
<svg class="a" style="left:571.45px;top:201.6px;overflow:visible" width="20" height="30"><text transform="translate(10.6 30) rotate(-90)" x="0" y="0" font-family="Liberation Sans" font-size="11" fill="#000" stroke="#000" stroke-width="0.1">Date</text></svg>
<svg class="a" style="left:457.54999999999995px;top:248.7px;overflow:visible" width="300" height="16"><text x="150" y="12" text-anchor="middle" font-family="Liberation Sans" font-size="11.4" font-weight="700" font-style="normal" fill="#000">Rev.</text></svg>
<svg class="a" style="left:599.55px;top:201.6px;overflow:visible" width="20" height="30"><text transform="translate(10.6 30) rotate(-90)" x="0" y="0" font-family="Liberation Sans" font-size="11" fill="#000" stroke="#000" stroke-width="0.1">Date</text></svg>
<svg class="a" style="left:485.6500000000001px;top:248.7px;overflow:visible" width="300" height="16"><text x="150" y="12" text-anchor="middle" font-family="Liberation Sans" font-size="11.4" font-weight="700" font-style="normal" fill="#000">Rev.</text></svg>
<svg class="a" style="left:627.6500000000001px;top:201.6px;overflow:visible" width="20" height="30"><text transform="translate(10.6 30) rotate(-90)" x="0" y="0" font-family="Liberation Sans" font-size="11" fill="#000" stroke="#000" stroke-width="0.1">Date</text></svg>
<svg class="a" style="left:513.8px;top:248.7px;overflow:visible" width="300" height="16"><text x="150" y="12" text-anchor="middle" font-family="Liberation Sans" font-size="11.4" font-weight="700" font-style="normal" fill="#000">Rev.</text></svg>
<svg class="a" style="left:655.8px;top:201.6px;overflow:visible" width="20" height="30"><text transform="translate(10.6 30) rotate(-90)" x="0" y="0" font-family="Liberation Sans" font-size="11" fill="#000" stroke="#000" stroke-width="0.1">Date</text></svg>
<svg class="a" style="left:542.0px;top:248.7px;overflow:visible" width="300" height="16"><text x="150" y="12" text-anchor="middle" font-family="Liberation Sans" font-size="11.4" font-weight="700" font-style="normal" fill="#000">Rev.</text></svg>
<svg class="a" style="left:684.0px;top:201.6px;overflow:visible" width="20" height="30"><text transform="translate(10.6 30) rotate(-90)" x="0" y="0" font-family="Liberation Sans" font-size="11" fill="#000" stroke="#000" stroke-width="0.1">Date</text></svg>
<svg class="a" style="left:-66.55px;top:277.9px;overflow:visible" width="300" height="16"><text x="150" y="12" text-anchor="middle" font-family="Liberation Sans" font-size="11.15" font-weight="400" font-style="italic" fill="#000">Mechanical</text></svg>
<svg class="a" style="left:-66.55px;top:292.5px;overflow:visible" width="300" height="16"><text x="150" y="12" text-anchor="middle" font-family="Liberation Sans" font-size="11.15" font-weight="400" font-style="normal" fill="#000" stroke="#000" stroke-width="0.2">2000-AA-M101</text></svg>
<svg class="a" style="left:157.39999999999998px;top:292.5px;overflow:visible" width="300" height="16"><text x="150" y="12" text-anchor="middle" font-family="Liberation Sans" font-size="11.15" font-weight="400" font-style="normal" fill="#000" stroke="#000" stroke-width="0.2">Heating &amp; Ventilation Services - Ground Floor</text></svg>
<svg class="a" style="left:339.7px;top:292.5px;overflow:visible" width="300" height="16"><text x="150" y="12" text-anchor="middle" font-family="Liberation Sans" font-size="11.15" font-weight="400" font-style="normal" fill="#000" stroke="#000" stroke-width="0.2">1:100</text></svg>
<svg class="a" style="left:-66.55px;top:307px;overflow:visible" width="300" height="16"><text x="150" y="12" text-anchor="middle" font-family="Liberation Sans" font-size="11.15" font-weight="400" font-style="normal" fill="#000" stroke="#000" stroke-width="0.2">2000-AA-M102</text></svg>
<svg class="a" style="left:157.39999999999998px;top:307px;overflow:visible" width="300" height="16"><text x="150" y="12" text-anchor="middle" font-family="Liberation Sans" font-size="11.15" font-weight="400" font-style="normal" fill="#000" stroke="#000" stroke-width="0.2">Heat. &amp; Vent. Services - First/Second Floors</text></svg>
<svg class="a" style="left:339.7px;top:307px;overflow:visible" width="300" height="16"><text x="150" y="12" text-anchor="middle" font-family="Liberation Sans" font-size="11.15" font-weight="400" font-style="normal" fill="#000" stroke="#000" stroke-width="0.2">1:100</text></svg>
<svg class="a" style="left:-66.55px;top:321.5px;overflow:visible" width="300" height="16"><text x="150" y="12" text-anchor="middle" font-family="Liberation Sans" font-size="11.15" font-weight="400" font-style="normal" fill="#000" stroke="#000" stroke-width="0.2">2000-AA-M201</text></svg>
<svg class="a" style="left:157.39999999999998px;top:321.5px;overflow:visible" width="300" height="16"><text x="150" y="12" text-anchor="middle" font-family="Liberation Sans" font-size="11.15" font-weight="400" font-style="normal" fill="#000" stroke="#000" stroke-width="0.2">Water Services - Ground Floor</text></svg>
<svg class="a" style="left:339.7px;top:321.5px;overflow:visible" width="300" height="16"><text x="150" y="12" text-anchor="middle" font-family="Liberation Sans" font-size="11.15" font-weight="400" font-style="normal" fill="#000" stroke="#000" stroke-width="0.2">1:100</text></svg>
<svg class="a" style="left:-66.55px;top:336px;overflow:visible" width="300" height="16"><text x="150" y="12" text-anchor="middle" font-family="Liberation Sans" font-size="11.15" font-weight="400" font-style="normal" fill="#000" stroke="#000" stroke-width="0.2">2000-AA-M202</text></svg>
<svg class="a" style="left:157.39999999999998px;top:336px;overflow:visible" width="300" height="16"><text x="150" y="12" text-anchor="middle" font-family="Liberation Sans" font-size="11.15" font-weight="400" font-style="normal" fill="#000" stroke="#000" stroke-width="0.2">Water Services - First/Second Floors</text></svg>
<svg class="a" style="left:339.7px;top:336px;overflow:visible" width="300" height="16"><text x="150" y="12" text-anchor="middle" font-family="Liberation Sans" font-size="11.15" font-weight="400" font-style="normal" fill="#000" stroke="#000" stroke-width="0.2">1:100</text></svg>
<svg class="a" style="left:-66.55px;top:350.6px;overflow:visible" width="300" height="16"><text x="150" y="12" text-anchor="middle" font-family="Liberation Sans" font-size="11.15" font-weight="400" font-style="normal" fill="#000" stroke="#000" stroke-width="0.2">2000-AA-M301</text></svg>
<svg class="a" style="left:157.39999999999998px;top:350.6px;overflow:visible" width="300" height="16"><text x="150" y="12" text-anchor="middle" font-family="Liberation Sans" font-size="11.15" font-weight="400" font-style="normal" fill="#000" stroke="#000" stroke-width="0.2">Drainage Services - Ground Floor</text></svg>
<svg class="a" style="left:339.7px;top:350.6px;overflow:visible" width="300" height="16"><text x="150" y="12" text-anchor="middle" font-family="Liberation Sans" font-size="11.15" font-weight="400" font-style="normal" fill="#000" stroke="#000" stroke-width="0.2">1:100</text></svg>
<svg class="a" style="left:-66.55px;top:364.9px;overflow:visible" width="300" height="16"><text x="150" y="12" text-anchor="middle" font-family="Liberation Sans" font-size="11.15" font-weight="400" font-style="normal" fill="#000" stroke="#000" stroke-width="0.2">2000-AA-M301</text></svg>
<svg class="a" style="left:157.39999999999998px;top:364.9px;overflow:visible" width="300" height="16"><text x="150" y="12" text-anchor="middle" font-family="Liberation Sans" font-size="11.15" font-weight="400" font-style="normal" fill="#000" stroke="#000" stroke-width="0.2">Drainage Services - First/Second Floors</text></svg>
<svg class="a" style="left:339.7px;top:364.9px;overflow:visible" width="300" height="16"><text x="150" y="12" text-anchor="middle" font-family="Liberation Sans" font-size="11.15" font-weight="400" font-style="normal" fill="#000" stroke="#000" stroke-width="0.2">1:100</text></svg>
<svg class="a" style="left:-66.55px;top:451.8px;overflow:visible" width="300" height="16"><text x="150" y="12" text-anchor="middle" font-family="Liberation Sans" font-size="11.15" font-weight="400" font-style="normal" fill="#000" stroke="#000" stroke-width="0.2">2000-AA-E101</text></svg>
<svg class="a" style="left:157.39999999999998px;top:451.8px;overflow:visible" width="300" height="16"><text x="150" y="12" text-anchor="middle" font-family="Liberation Sans" font-size="11.15" font-weight="400" font-style="normal" fill="#000" stroke="#000" stroke-width="0.2">Power &amp; Data - Ground Floor</text></svg>
<svg class="a" style="left:339.7px;top:451.8px;overflow:visible" width="300" height="16"><text x="150" y="12" text-anchor="middle" font-family="Liberation Sans" font-size="11.15" font-weight="400" font-style="normal" fill="#000" stroke="#000" stroke-width="0.2">1:100</text></svg>
<svg class="a" style="left:-66.55px;top:466.2px;overflow:visible" width="300" height="16"><text x="150" y="12" text-anchor="middle" font-family="Liberation Sans" font-size="11.15" font-weight="400" font-style="normal" fill="#000" stroke="#000" stroke-width="0.2">2000-AA-E102</text></svg>
<svg class="a" style="left:157.39999999999998px;top:466.2px;overflow:visible" width="300" height="16"><text x="150" y="12" text-anchor="middle" font-family="Liberation Sans" font-size="11.15" font-weight="400" font-style="normal" fill="#000" stroke="#000" stroke-width="0.2">Power &amp; Data- First/Second Floors</text></svg>
<svg class="a" style="left:339.7px;top:466.2px;overflow:visible" width="300" height="16"><text x="150" y="12" text-anchor="middle" font-family="Liberation Sans" font-size="11.15" font-weight="400" font-style="normal" fill="#000" stroke="#000" stroke-width="0.2">1:100</text></svg>
<svg class="a" style="left:-66.55px;top:480.7px;overflow:visible" width="300" height="16"><text x="150" y="12" text-anchor="middle" font-family="Liberation Sans" font-size="11.15" font-weight="400" font-style="normal" fill="#000" stroke="#000" stroke-width="0.2">2000-AA-E201</text></svg>
<svg class="a" style="left:157.39999999999998px;top:480.7px;overflow:visible" width="300" height="16"><text x="150" y="12" text-anchor="middle" font-family="Liberation Sans" font-size="11.15" font-weight="400" font-style="normal" fill="#000" stroke="#000" stroke-width="0.2">Lighting, Fire Alarm &amp; Security - Ground Floor</text></svg>
<svg class="a" style="left:339.7px;top:480.7px;overflow:visible" width="300" height="16"><text x="150" y="12" text-anchor="middle" font-family="Liberation Sans" font-size="11.15" font-weight="400" font-style="normal" fill="#000" stroke="#000" stroke-width="0.2">1:100</text></svg>
<svg class="a" style="left:-66.55px;top:495.2px;overflow:visible" width="300" height="16"><text x="150" y="12" text-anchor="middle" font-family="Liberation Sans" font-size="11.15" font-weight="400" font-style="normal" fill="#000" stroke="#000" stroke-width="0.2">2000-AA-E202</text></svg>
<svg class="a" style="left:157.39999999999998px;top:495.2px;overflow:visible" width="300" height="16"><text x="150" y="12" text-anchor="middle" font-family="Liberation Sans" font-size="11.15" font-weight="400" font-style="normal" fill="#000" stroke="#000" stroke-width="0.2">Lighting, Fire Alarm &amp; Security - First/Second Floors</text></svg>
<svg class="a" style="left:339.7px;top:495.2px;overflow:visible" width="300" height="16"><text x="150" y="12" text-anchor="middle" font-family="Liberation Sans" font-size="11.15" font-weight="400" font-style="normal" fill="#000" stroke="#000" stroke-width="0.2">1:100</text></svg>
<svg class="a" style="left:-66.55px;top:567.7px;overflow:visible" width="300" height="16"><text x="150" y="12" text-anchor="middle" font-family="Liberation Sans" font-size="11.15" font-weight="400" font-style="normal" fill="#000" stroke="#000" stroke-width="0.2">2000-AA-ME01</text></svg>
<svg class="a" style="left:157.39999999999998px;top:567.7px;overflow:visible" width="300" height="16"><text x="150" y="12" text-anchor="middle" font-family="Liberation Sans" font-size="11.15" font-weight="400" font-style="normal" fill="#000" stroke="#000" stroke-width="0.2">M&amp;E Site Services Layout</text></svg>
<svg class="a" style="left:339.7px;top:567.7px;overflow:visible" width="300" height="16"><text x="150" y="12" text-anchor="middle" font-family="Liberation Sans" font-size="11.15" font-weight="400" font-style="normal" fill="#000" stroke="#000" stroke-width="0.2">1:500</text></svg>
<svg class="a" style="left:-66.55px;top:437.4px;overflow:visible" width="300" height="16"><text x="150" y="12" text-anchor="middle" font-family="Liberation Sans" font-size="11.15" font-weight="400" font-style="italic" fill="#000">Electrical</text></svg>
<svg class="a" style="left:-66.55px;top:553.2px;overflow:visible" width="300" height="16"><text x="150" y="12" text-anchor="middle" font-family="Liberation Sans" font-size="11.15" font-weight="400" font-style="italic" fill="#000">M&amp;E</text></svg>
</body></html>
